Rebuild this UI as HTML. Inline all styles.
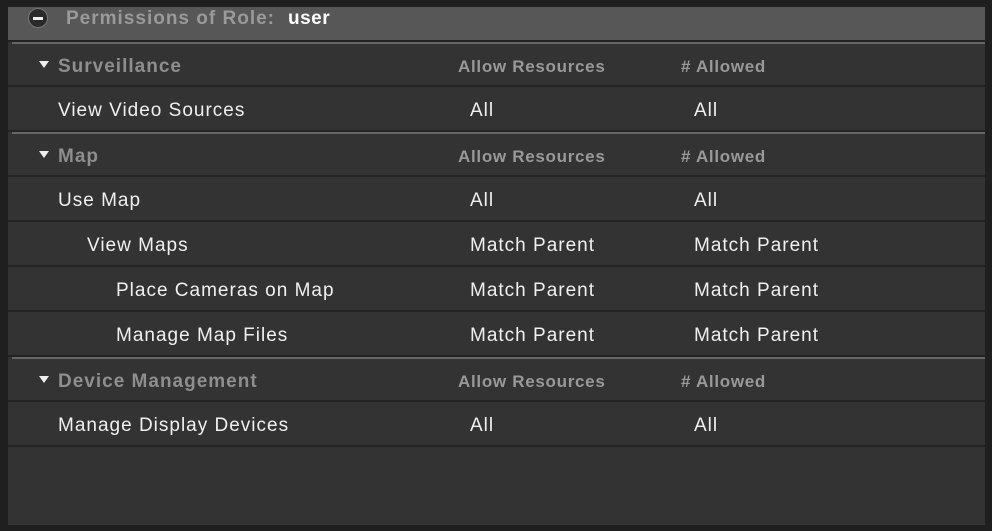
<!DOCTYPE html>
<html><head><style>
body{margin:0;width:992px;height:531px;background:#1f1f1f;font-family:"Liberation Sans",sans-serif;position:relative;overflow:hidden}
.panel{position:absolute;left:8px;top:7px;width:977px;height:518px;background:#333}
.hdr{position:absolute;left:8px;top:7px;width:977px;height:33px;background:#575757}
.hdr .t{position:absolute;left:58px;top:1px;font-size:19px;font-weight:bold;color:#9a9a9a;letter-spacing:1px}
.hdr .u{color:#fff;margin-left:13px;letter-spacing:0.5px}
.ic{position:absolute;left:20px;top:1px;width:18px;height:18px;border-radius:50%;background:#2a2a2a;border:1px solid #777}
.ic:after{content:"";position:absolute;left:4px;top:8px;width:10px;height:3px;background:#eee}
.row{position:absolute;left:8px;width:977px;height:43px;border-bottom:2px solid #242424;font-size:19px;color:#f0f0f0;letter-spacing:1px}
.row span{position:absolute;top:13px;white-space:nowrap}
.sec span.n{font-weight:bold;color:#8e8e8e;left:50px}
.sec span.h{font-weight:bold;color:#999;font-size:17px;letter-spacing:0.7px}
.gl{position:absolute;left:12px;width:973px;height:2px;background:#666}
.tri{position:absolute;left:31px;top:17px;width:0;height:0;border-left:5px solid transparent;border-right:5px solid transparent;border-top:7px solid #eee}
</style></head><body>
<div class="panel"></div>
<div class="hdr"><div class="ic"></div><div class="t">Permissions of Role:<span class="u">user</span></div></div>
<div style="position:absolute;left:8px;top:40px;width:977px;height:2px;background:#242424"></div>

<div class="gl" style="top:42px"></div>
<div class="row sec" style="top:44px;height:41px"><div class="tri"></div><span class="n" style="top:12px">Surveillance</span><span class="h" style="left:450px;top:13px">Allow Resources</span><span class="h" style="left:673px;top:13px"># Allowed</span></div>
<div class="row" style="top:87px"><span style="left:50px">View Video Sources</span><span style="left:462px">All</span><span style="left:686px">All</span></div>

<div class="gl" style="top:132px"></div>
<div class="row sec" style="top:134px;height:41px"><div class="tri"></div><span class="n" style="top:12px">Map</span><span class="h" style="left:450px;top:13px">Allow Resources</span><span class="h" style="left:673px;top:13px"># Allowed</span></div>
<div class="row" style="top:177px"><span style="left:50px">Use Map</span><span style="left:462px">All</span><span style="left:686px">All</span></div>
<div class="row" style="top:222px"><span style="left:79px">View Maps</span><span style="left:462px">Match Parent</span><span style="left:686px">Match Parent</span></div>
<div class="row" style="top:267px"><span style="left:108px">Place Cameras on Map</span><span style="left:462px">Match Parent</span><span style="left:686px">Match Parent</span></div>
<div class="row" style="top:312px"><span style="left:108px">Manage Map Files</span><span style="left:462px">Match Parent</span><span style="left:686px">Match Parent</span></div>

<div class="gl" style="top:357px"></div>
<div class="row sec" style="top:359px;height:41px"><div class="tri"></div><span class="n" style="top:12px">Device Management</span><span class="h" style="left:450px;top:13px">Allow Resources</span><span class="h" style="left:673px;top:13px"># Allowed</span></div>
<div class="row" style="top:402px"><span style="left:50px">Manage Display Devices</span><span style="left:462px">All</span><span style="left:686px">All</span></div>
</body></html>
